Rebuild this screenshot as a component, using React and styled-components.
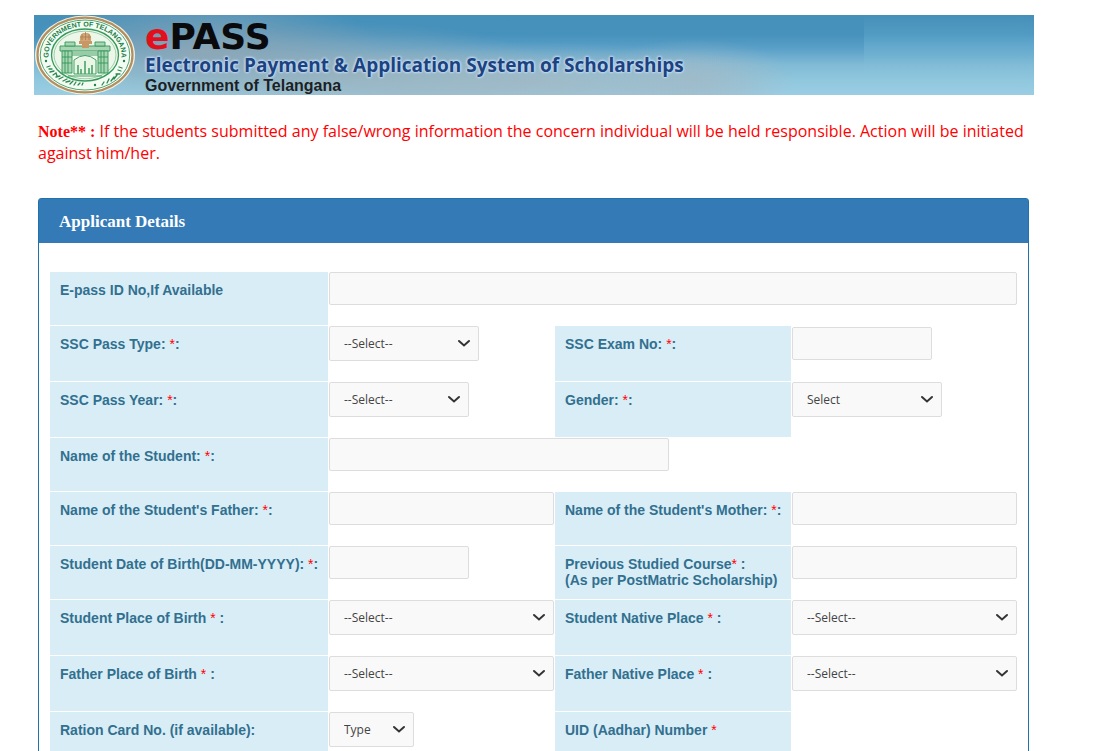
import React, { useState } from 'react';
import styled, { createGlobalStyle } from 'styled-components';

const GlobalStyle = createGlobalStyle`
  * {
    box-sizing: border-box;
  }

  body {
    margin: 0;
    background: #fff;
    font-family: 'Open Sans', sans-serif;
  }
`;

const Page = styled.div`
  padding: 15px 68px 0 34px;
`;

const Banner = styled.header`
  display: flex;
  height: 80px;
  overflow: hidden;
  background:
    linear-gradient(rgba(130, 195, 225, 0), rgba(135, 200, 225, 0.28) 40%, rgba(135, 200, 225, 0) 80%) 100% 0 / 17% 100% no-repeat,
    radial-gradient(ellipse 18% 70% at 17% 45%, rgba(145, 167, 180, 0.9), rgba(145, 167, 180, 0) 100%),
    radial-gradient(ellipse 20% 60% at 32% 70%, rgba(155, 175, 186, 0.8), rgba(155, 175, 186, 0) 100%),
    radial-gradient(ellipse 26% 50% at 50% 84%, rgba(162, 184, 196, 0.9), rgba(162, 184, 196, 0) 100%),
    radial-gradient(ellipse 10% 50% at 66% 80%, rgba(160, 186, 200, 0.8), rgba(160, 186, 200, 0) 100%),
    linear-gradient(#4590b9, #4792bd 25%, #5aa0c8 42%, #80bad5 62%, #90c8de 82%, #9bcde3);
`;

const BannerText = styled.div`
  display: flex;
  flex-direction: column;
  padding: 4px 0 0 9px;
  white-space: nowrap;
`;

const Brand = styled.h1`
  margin: 0;
  font: bold 36px/36px 'DejaVu Sans', sans-serif;
  color: #0a0a0c;
`;

const BrandMark = styled.span`
  color: #e3101c;
`;

const Tagline = styled.p`
  margin: 0;
  font: bold 19px/20px 'Open Sans', sans-serif;
  color: #1c437f;
  text-shadow: 0 0 2px #c4dcf4, 0 0 2px #c4dcf4, 0 0 3px #c4dcf4, 0 0 3px #c4dcf4;
`;

const Government = styled.p`
  margin: 0;
  font: bold 16px/22px 'Liberation Sans', sans-serif;
  color: #1c1f24;
`;

const EmblemSvg = styled.svg`
  flex: none;
  width: 102px;
  height: 80px;
`;

const Content = styled.main`
  padding: 0 5px 0 4px;
`;

const Note = styled.p`
  margin: 25px 0 34px;
  font-size: 16px;
  line-height: 22px;
  color: #f00;
`;

const NoteTitle = styled.b`
  font-family: 'Liberation Serif', serif;
  line-height: 16px;
`;

const Panel = styled.section`
  border: 1px solid #2072aa;
  border-radius: 3px;
`;

const PanelHeader = styled.h2`
  margin: 0;
  padding: 13px 20px 11px;
  background: #337ab7;
  font: bold 17px/20px 'Liberation Serif', serif;
  color: #fff;
`;

const FormGrid = styled.form`
  display: grid;
  grid-template-columns: 278fr 225fr 236fr 225fr;
  gap: 1px;
  padding: 29px 11px;
`;

const Label = styled.label`
  padding: 10px 4px 10px 10px;
  background: #d9edf7;
  font: bold 14px/16px 'Liberation Sans', sans-serif;
  color: #31708f;
`;

const Required = styled.span`
  font-weight: normal;
  color: #f00;
`;

const Field = styled.div`
  display: flex;
  align-items: center;
  min-width: 0;
  padding-bottom: 20px;
  grid-column: span ${({ $span }) => $span || 1};
`;

const TextInput = styled.input`
  width: ${({ $width }) => $width || '100%'};
  height: 33px;
  padding: 0 14px;
  border: 1px solid #ddd;
  border-radius: 2px;
  background: #f9f9f9;
  font: 12px 'Open Sans', sans-serif;
  color: #333;
`;

const SelectBox = styled.div`
  position: relative;
  width: ${({ $width }) => $width || '100%'};
`;

const StyledSelect = styled.select`
  display: block;
  width: 100%;
  height: 35px;
  padding: 0 28px 0 14px;
  appearance: none;
  border: 1px solid #ddd;
  border-radius: 2px;
  background: #f9f9f9;
  font: 12px 'Open Sans', sans-serif;
  color: #444;
`;

const Chevron = styled.svg`
  position: absolute;
  top: 13px;
  right: 8px;
  width: 14px;
  height: 9px;
  pointer-events: none;
`;

const rows = [
  [{ id: 'epassId', label: 'E-pass ID No,If Available', span: 3 }],
  [
    { id: 'sscType', label: 'SSC Pass Type: ', mark: '*', end: ':', type: 'select', text: '--Select--', width: '150px' },
    { id: 'sscExam', label: 'SSC Exam No: ', mark: '*', end: ':', width: '140px' },
  ],
  [
    { id: 'sscYear', label: 'SSC Pass Year: ', mark: '*', end: ':', type: 'select', text: '--Select--', width: '140px' },
    { id: 'gender', label: 'Gender: ', mark: '*', end: ':', type: 'select', text: 'Select', width: '150px' },
  ],
  [{ id: 'student', label: 'Name of the Student: ', mark: '*', end: ':', span: 3, width: '340px' }],
  [
    { id: 'father', label: "Name of the Student's Father: ", mark: '*', end: ':' },
    { id: 'mother', label: "Name of the Student's Mother: ", mark: '*', end: ':' },
  ],
  [
    { id: 'dob', label: 'Student Date of Birth(DD-MM-YYYY): ', mark: '*', end: ':', width: '140px' },
    { id: 'course', label: 'Previous Studied Course', mark: '*', end: ' :', extra: '(As per PostMatric Scholarship)' },
  ],
  [
    { id: 'birthPlace', label: 'Student Place of Birth ', mark: '*', end: ' :', type: 'select', text: '--Select--' },
    { id: 'nativePlace', label: 'Student Native Place ', mark: '*', end: ' :', type: 'select', text: '--Select--' },
  ],
  [
    { id: 'fatherBirth', label: 'Father Place of Birth ', mark: '*', end: ' :', type: 'select', text: '--Select--' },
    { id: 'fatherNative', label: 'Father Native Place ', mark: '*', end: ' :', type: 'select', text: '--Select--' },
  ],
  [
    { id: 'ration', label: 'Ration Card No. (if available):', type: 'select', text: 'Type', width: '85px' },
    { id: 'aadhar', label: 'UID (Aadhar) Number ', mark: '*', type: 'none' },
  ],
];

const Emblem = () => (
  <EmblemSvg viewBox="0 0 102 80" role="img" aria-label="Telangana emblem">
    <defs>
      <path id="ringTop" d="M15.800 47.500 A36.500 28.500 0 1 1 86.200 47.500" />
    </defs>
    <ellipse cx="51" cy="40" rx="50" ry="39.500" fill="#f5f0df" />
    <ellipse cx="51" cy="40" rx="47.500" ry="37.300" fill="#fff" stroke="#b08f60" strokeWidth="2.200" />
    <ellipse cx="51" cy="40" rx="44.800" ry="35" fill="#f4fbf3" stroke="#4da76e" strokeWidth="1" />
    <ellipse cx="51" cy="40" rx="33.500" ry="26" fill="#edf7e9" stroke="#35995b" strokeWidth="1.300" />
    <ellipse cx="51" cy="40" rx="31" ry="23.800" fill="none" stroke="#69b483" strokeWidth="0.600" />
    <text fontFamily="Liberation Sans" fontWeight="bold" fontSize="7" fill="#20804a">
      <textPath href="#ringTop" startOffset="50%" textAnchor="middle">GOVERNMENT OF TELANGANA</textPath>
    </text>
    <g fill="none" stroke="#2b8850" strokeWidth="1.300" strokeLinecap="round">
      <path d="M13 52l3-1m-1 3l3 0m-2 3l4-1m-1 4l3-2 1 3m-1 1l4-1m-1 3l4-2m0 4l4-2m-1 3l4-1m0 3l3-3m1 4l2-3m2 3l2-2m2 2l1-2" />
      <path d="M68 70l2-3m3 1l2-4m2 2l3-4m0 2l3-4m-1-1l4 0m-2-4l3 1m-2-4l3 1" />
    </g>
    <circle cx="61" cy="70" r="1.200" fill="#20804a" />
    <circle cx="12" cy="46" r="1.200" fill="#20804a" />
    <circle cx="90" cy="46" r="1.200" fill="#20804a" />

    {/* gateway */}
    <g fill="#a9d5b5" stroke="#329658" strokeWidth="0.900">
      <path d="M26 31h50v5H26z" />
      <path d="M28 36h10v22H28zM64 36h10v22H64z" />
      <path d="M31 27h10v4H31zM61 27h10v4H61z" />
      <path d="M38 38h26M38 40h26M31 36v22M34 36v22M67 36v22M70 36v22M28 42h10M28 48h10M64 42h10M64 48h10" />
      <path d="M40 59V45q11-9 22 0v14z" fill="#eaf6e6" />
      <path d="M34 61h34" />
    </g>
    <path d="M44 59V50m3 9V54m4 5V46m4 13V53m3 6V50" fill="none" stroke="#4ca36b" strokeWidth="1.600" />

    {/* lion capital */}
    <path d="M46 26q-1-6 3-8h5q4 2 3 8z" fill="#d4a574" />
    <path d="M46 22h11M48 19v6M51.500 17v8M55 19v6" stroke="#a97d50" strokeWidth="0.800" />
    <path d="M45 26h13v3H45zM48 29h7v4h-7z" fill="#c99765" />
  </EmblemSvg>
);

const FormField = ({ field }) => {
  const [value, setValue] = useState('');
  const { id, label, mark, end, extra, type, text, width, span } = field;

  return (
    <>
      <Label htmlFor={type === 'none' ? undefined : id}>
        {label}
        {mark && <Required>{mark}</Required>}
        {end}
        {extra && <br />}
        {extra}
      </Label>
      <Field $span={span}>
        {type === 'select' && (
          <SelectBox $width={width}>
            <StyledSelect id={id} value={value} onChange={(e) => setValue(e.target.value)}>
              <option value="">{text}</option>
            </StyledSelect>
            <Chevron viewBox="0 0 14 9" aria-hidden="true">
              <path d="M2 2l5 4.500L12 2" fill="none" stroke="#333" strokeWidth="2" strokeLinecap="round" />
            </Chevron>
          </SelectBox>
        )}
        {!type && (
          <TextInput id={id} type="text" $width={width} value={value} onChange={(e) => setValue(e.target.value)} />
        )}
      </Field>
    </>
  );
};

const App = () => (
  <>
    <GlobalStyle />
    <Page>
      <Banner>
        <Emblem />
        <BannerText>
          <Brand>
            <BrandMark>e</BrandMark>PASS
          </Brand>
          <Tagline>Electronic Payment &amp; Application System of Scholarships</Tagline>
          <Government>Government of Telangana</Government>
        </BannerText>
      </Banner>

      <Content>
        <Note>
          <NoteTitle>Note** :</NoteTitle> If the students submitted any false/wrong information the concern
          individual will be held responsible. Action will be initiated against him/her.
        </Note>

        <Panel>
          <PanelHeader>Applicant Details</PanelHeader>
          <FormGrid>
            {rows.map((row) => row.map((field) => <FormField key={field.id} field={field} />))}
          </FormGrid>
        </Panel>
      </Content>
    </Page>
  </>
);

export default App;
